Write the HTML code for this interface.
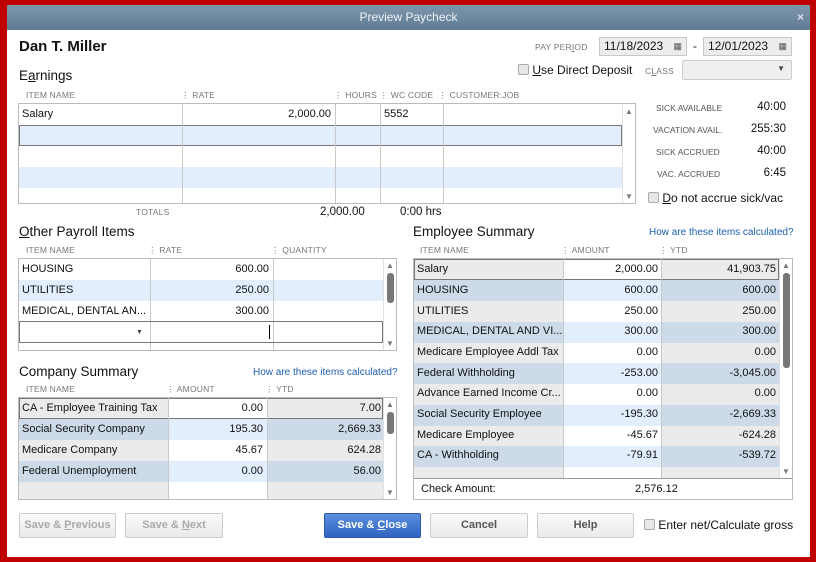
<!DOCTYPE html>
<html><head><meta charset="utf-8"><style>
*{box-sizing:border-box;margin:0;padding:0}
body{width:816px;height:562px;position:relative;overflow:hidden;background:#c00000;font-family:"Liberation Sans",sans-serif;font-size:11px;color:#111}
.a{position:absolute}
#win{left:7px;top:5px;width:803px;height:552px;background:#fff}
#title{left:7px;top:5px;width:803px;height:25px;background:linear-gradient(#7d97ad,#5f7b94);color:#eef3f7;font-size:12px;text-align:center;line-height:25px}
.h{font-size:8.5px;color:#777;letter-spacing:.2px}
.sec{font-size:13.5px;color:#111}
.tb{border:1px solid #bbb;background:#fff;overflow:hidden}
.r{position:absolute;left:0;right:0;height:21px;line-height:21px;white-space:nowrap}
.c{position:absolute;top:0;bottom:0;padding:0 3px;overflow:hidden}
.vl{position:absolute;top:0;bottom:0;width:1px;background:#c8c8c8}
.rt{text-align:right}
.lb{background:#e3eefc}
.sb{position:absolute;top:0;bottom:0;width:13px;background:#fff;border-left:1px solid #e0e0e0}
.thumb{position:absolute;left:3px;width:7px;border-radius:3px;background:#777}
.up,.dn{position:absolute;left:2px;font-size:8px;color:#777}
.link{color:#1d5fae;font-size:10px}
.btn{position:absolute;top:513px;height:25px;border:1px solid #ccc;border-radius:2px;background:linear-gradient(#fafafa,#eaeaea);text-align:center;line-height:23px;font-size:11px;font-weight:bold;color:#555}
.dis{color:#aaa}
.cb{display:inline-block;width:11px;height:11px;border:1px solid #aaa;background:#e8e8e8;border-radius:2px;vertical-align:-1px}
.date{position:absolute;top:37px;height:19px;border:1px solid #c8c8c8;background:#ededed;font-size:12px;line-height:17px;padding-left:4px}
.lbl{position:absolute;font-size:8.5px;color:#555}
.val{position:absolute;font-size:11.5px;text-align:right;width:50px}
</style></head><body>
<div id="win" class="a"></div>
<div id="title" class="a">Preview Paycheck<span style="position:absolute;right:6px;top:0;font-weight:bold;color:#dde">×</span></div>

<div class="a" style="left:19px;top:38px;font-size:15px;font-weight:bold">Dan T. Miller</div>
<div class="a h" style="left:535px;top:42px">PAY PER<u>I</u>OD</div>
<div class="date" style="left:599px;width:88px">11/18/2023<span style="position:absolute;right:4px;font-size:9px;color:#555">▦</span></div>
<div class="a" style="left:693px;top:39px;font-size:12px">-</div>
<div class="date" style="left:703px;width:89px">12/01/2023<span style="position:absolute;right:4px;font-size:9px;color:#555">▦</span></div>
<div class="a" style="left:518px;top:63px;font-size:12px"><span class="cb"></span> <u>U</u>se Direct Deposit</div>
<div class="a h" style="left:645px;top:66px">C<u>L</u>ASS</div>
<div class="a" style="left:682px;top:60px;width:110px;height:20px;border:1px solid #ccc;background:#efefef;border-radius:2px"><span style="position:absolute;right:6px;top:3px;font-size:8px;color:#444">▼</span></div>

<div class="a sec" style="left:19px;top:68px">E<u>a</u>rnings</div>
<div class="a h" style="left:26px;top:90px">ITEM NAME</div>
<div class="a h" style="left:181px;top:90px">⋮ RATE</div>
<div class="a h" style="left:334px;top:90px">⋮ HOURS ⋮ WC CODE &nbsp;⋮ CUSTOMER:JOB</div>
<div class="a tb" style="left:18px;top:103px;width:618px;height:101px">
 <div class="r" style="top:0">
  <div class="c" style="left:0;width:164px">Salary</div><div class="c rt" style="left:164px;width:151px">2,000.00</div><div class="c" style="left:362px">5552</div></div>
 <div class="r lb" style="top:21px;left:0;right:13px;height:21px;border:1px solid #777"></div>
 <div class="r lb" style="top:63px;right:13px"></div>
 <div class="vl" style="left:163px"></div><div class="vl" style="left:316px"></div><div class="vl" style="left:361px"></div><div class="vl" style="left:424px"></div>
 <div class="sb" style="right:0"><span class="up" style="top:3px">▲</span><span class="dn" style="bottom:2px">▼</span></div>
</div>
<div class="a h" style="left:136px;top:207px">TOTALS</div>
<div class="a" style="left:320px;top:206px;font-size:11.5px">2,000.00</div>
<div class="a" style="left:400px;top:206px;font-size:11.5px">0:00 hrs</div>

<div class="lbl" style="left:656px;top:103px">SICK AVAILABLE</div><div class="val" style="left:736px;top:101px">40:00</div>
<div class="lbl" style="left:653px;top:125px">VACATION AVAIL.</div><div class="val" style="left:736px;top:123px">255:30</div>
<div class="lbl" style="left:656px;top:147px">SICK ACCRUED</div><div class="val" style="left:736px;top:145px">40:00</div>
<div class="lbl" style="left:657px;top:169px">VAC. ACCRUED</div><div class="val" style="left:736px;top:167px">6:45</div>
<div class="a" style="left:648px;top:191px;font-size:12px"><span class="cb"></span> <u>D</u>o not accrue sick/vac</div>

<div class="a sec" style="left:19px;top:224px"><u>O</u>ther Payroll Items</div>
<div class="a h" style="left:26px;top:245px">ITEM NAME</div>
<div class="a h" style="left:148px;top:245px">⋮ RATE</div>
<div class="a h" style="left:271px;top:245px">⋮ QUANTITY</div>
<div class="a tb" style="left:18px;top:258px;width:379px;height:93px">
 <div class="r" style="top:0"><div class="c" style="left:0">HOUSING</div><div class="c rt" style="left:131px;width:122px">600.00</div></div>
 <div class="r lb" style="top:21px;right:13px"><div class="c" style="left:0">UTILITIES</div><div class="c rt" style="left:131px;width:122px">250.00</div></div>
 <div class="r" style="top:42px"><div class="c" style="left:0">MEDICAL, DENTAL AN...</div><div class="c rt" style="left:131px;width:122px">300.00</div></div>
 <div class="vl" style="left:131px"></div><div class="vl" style="left:254px"></div>
 <div class="r" style="top:62px;right:13px;height:22px;border:1px solid #777;background:#fff"><span style="position:absolute;left:116px;font-size:7px;color:#444">▼</span><span style="position:absolute;left:249px;top:3px;width:1px;height:14px;background:#000"></span><div class="vl" style="left:130px"></div><div class="vl" style="left:253px"></div></div>
 <div class="sb" style="right:0"><span class="up" style="top:2px">▲</span><div class="thumb" style="top:14px;height:30px"></div><span class="dn" style="bottom:2px">▼</span></div>
</div>

<div class="a sec" style="left:19px;top:364px">Company Summary</div>
<div class="a link" style="left:253px;top:367px">How are these items calculated?</div>
<div class="a h" style="left:26px;top:384px">ITEM NAME</div>
<div class="a h" style="left:166px;top:384px">⋮ AMOUNT</div>
<div class="a h" style="left:265px;top:384px">⋮ YTD</div>
<div class="a tb" style="left:18px;top:397px;width:379px;height:103px">
 <div class="r" style="top:21px;right:13px;background:#cddbe9"></div><div class="r" style="top:63px;right:13px;background:#cddbe9"></div>
 <div class="r" style="top:0;height:103px;left:0;width:150px;background:transparent"></div>
 <div style="position:absolute;left:0;top:0;width:150px;height:21px;background:#ebebeb"></div>
 <div style="position:absolute;left:0;top:42px;width:150px;height:21px;background:#ebebeb"></div>
 <div style="position:absolute;left:0;top:84px;width:150px;height:20px;background:#ebebeb"></div>
 <div style="position:absolute;left:150px;top:21px;width:99px;height:21px;background:#e3eefc"></div>
 <div style="position:absolute;left:150px;top:63px;width:99px;height:21px;background:#e3eefc"></div>
 <div style="position:absolute;left:150px;top:0;width:99px;height:21px;background:#fff"></div>
 <div style="position:absolute;left:150px;top:42px;width:99px;height:21px;background:#fff"></div>
 <div style="position:absolute;left:249px;top:0;width:116px;height:21px;background:#ebebeb"></div>
 <div style="position:absolute;left:249px;top:42px;width:116px;height:21px;background:#ebebeb"></div>
 <div style="position:absolute;left:249px;top:84px;width:116px;height:20px;background:#ebebeb"></div>
 <div class="r" style="top:0;right:13px;border:1px solid #777"></div>
 <div class="r" style="top:0"><div class="c" style="left:0">CA - Employee Training Tax</div><div class="c rt" style="left:150px;width:97px">0.00</div><div class="c rt" style="left:249px;width:116px">7.00</div></div>
 <div class="r" style="top:21px"><div class="c" style="left:0">Social Security Company</div><div class="c rt" style="left:150px;width:97px">195.30</div><div class="c rt" style="left:249px;width:116px">2,669.33</div></div>
 <div class="r" style="top:42px"><div class="c" style="left:0">Medicare Company</div><div class="c rt" style="left:150px;width:97px">45.67</div><div class="c rt" style="left:249px;width:116px">624.28</div></div>
 <div class="r" style="top:63px"><div class="c" style="left:0">Federal Unemployment</div><div class="c rt" style="left:150px;width:97px">0.00</div><div class="c rt" style="left:249px;width:116px">56.00</div></div>
 <div class="vl" style="left:149px"></div><div class="vl" style="left:248px"></div>
 <div class="sb" style="right:0"><span class="up" style="top:2px">▲</span><div class="thumb" style="top:14px;height:22px"></div><span class="dn" style="bottom:2px">▼</span></div>
</div>

<div class="a sec" style="left:413px;top:224px">Employee Summary</div>
<div class="a link" style="left:649px;top:227px">How are these items calculated?</div>
<div class="a h" style="left:420px;top:245px">ITEM NAME</div>
<div class="a h" style="left:561px;top:245px">⋮ AMOUNT</div>
<div class="a h" style="left:659px;top:245px">⋮ YTD</div>
<div class="a tb" style="left:413px;top:258px;width:380px;height:242px">
 <div style="position:absolute;left:0;top:0;width:150px;height:220px;background:#ebebeb"></div>
 <div style="position:absolute;left:248px;top:0;width:117px;height:220px;background:#ebebeb"></div>
 <div class="r" style="top:21px;right:13px;background:#cddbe9"></div>
 <div class="r" style="top:63px;right:13px;background:#cddbe9"></div>
 <div class="r" style="top:104px;right:13px;background:#cddbe9"></div>
 <div class="r" style="top:146px;right:13px;background:#cddbe9"></div>
 <div class="r" style="top:187px;right:13px;background:#cddbe9"></div>
 <div style="position:absolute;left:150px;top:0;width:98px;height:220px;background:#fff"></div>
 <div style="position:absolute;left:150px;top:21px;width:98px;height:21px;background:#e3eefc"></div>
 <div style="position:absolute;left:150px;top:63px;width:98px;height:21px;background:#e3eefc"></div>
 <div style="position:absolute;left:150px;top:104px;width:98px;height:21px;background:#e3eefc"></div>
 <div style="position:absolute;left:150px;top:146px;width:98px;height:21px;background:#e3eefc"></div>
 <div style="position:absolute;left:150px;top:187px;width:98px;height:21px;background:#e3eefc"></div>
 <div class="r" style="top:0;right:13px;border:1px solid #777"></div>
 <div class="r" style="top:0"><div class="c" style="left:0">Salary</div><div class="c rt" style="left:150px;width:97px">2,000.00</div><div class="c rt" style="left:248px;width:117px">41,903.75</div></div>
 <div class="r" style="top:21px"><div class="c" style="left:0">HOUSING</div><div class="c rt" style="left:150px;width:97px">600.00</div><div class="c rt" style="left:248px;width:117px">600.00</div></div>
 <div class="r" style="top:42px"><div class="c" style="left:0">UTILITIES</div><div class="c rt" style="left:150px;width:97px">250.00</div><div class="c rt" style="left:248px;width:117px">250.00</div></div>
 <div class="r" style="top:62px"><div class="c" style="left:0">MEDICAL, DENTAL AND VI...</div><div class="c rt" style="left:150px;width:97px">300.00</div><div class="c rt" style="left:248px;width:117px">300.00</div></div>
 <div class="r" style="top:83px"><div class="c" style="left:0">Medicare Employee Addl Tax</div><div class="c rt" style="left:150px;width:97px">0.00</div><div class="c rt" style="left:248px;width:117px">0.00</div></div>
 <div class="r" style="top:104px"><div class="c" style="left:0">Federal Withholding</div><div class="c rt" style="left:150px;width:97px">-253.00</div><div class="c rt" style="left:248px;width:117px">-3,045.00</div></div>
 <div class="r" style="top:124px"><div class="c" style="left:0">Advance Earned Income Cr...</div><div class="c rt" style="left:150px;width:97px">0.00</div><div class="c rt" style="left:248px;width:117px">0.00</div></div>
 <div class="r" style="top:145px"><div class="c" style="left:0">Social Security Employee</div><div class="c rt" style="left:150px;width:97px">-195.30</div><div class="c rt" style="left:248px;width:117px">-2,669.33</div></div>
 <div class="r" style="top:166px"><div class="c" style="left:0">Medicare Employee</div><div class="c rt" style="left:150px;width:97px">-45.67</div><div class="c rt" style="left:248px;width:117px">-624.28</div></div>
 <div class="r" style="top:186px"><div class="c" style="left:0">CA - Withholding</div><div class="c rt" style="left:150px;width:97px">-79.91</div><div class="c rt" style="left:248px;width:117px">-539.72</div></div>
 <div class="vl" style="left:149px;bottom:21px"></div><div class="vl" style="left:247px;bottom:21px"></div>
 <div class="sb" style="right:0;bottom:21px"><span class="up" style="top:2px">▲</span><div class="thumb" style="top:14px;height:95px"></div><span class="dn" style="bottom:2px">▼</span></div>
 <div style="position:absolute;left:0;right:0;top:219px;height:1px;background:#999"></div>
 <div class="r" style="top:220px;background:#fff"><div class="c" style="left:4px">Check Amount:</div><div class="c" style="left:218px">2,576.12</div></div>
</div>

<div class="btn dis" style="left:19px;width:97px">Save &amp; <u>P</u>revious</div>
<div class="btn dis" style="left:125px;width:98px">Save &amp; <u>N</u>ext</div>
<div class="btn" style="left:324px;width:97px;background:linear-gradient(#5b8fdc,#2f63c0);border-color:#2c5aa8;color:#fff">Save &amp; <u>C</u>lose</div>
<div class="btn" style="left:430px;width:98px">Cancel</div>
<div class="btn" style="left:537px;width:97px">Help</div>
<div class="a" style="left:644px;top:518px;font-size:12px"><span class="cb"></span> Enter net/Calculate <u>g</u>ross</div>
</body></html>
